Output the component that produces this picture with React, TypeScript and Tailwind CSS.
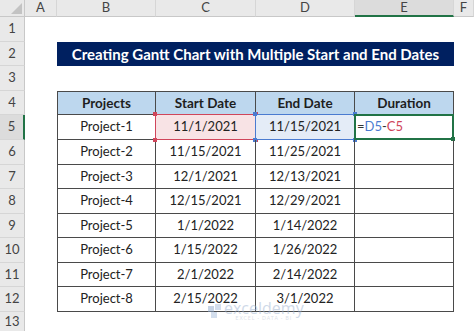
import React from 'react';

const cols = ['A', 'B', 'C', 'D', 'E', 'F'];
const rowStarts = [
    'row-start-2', 'row-start-3', 'row-start-4', 'row-start-5', 'row-start-6', 'row-start-7', 'row-start-8',
    'row-start-9', 'row-start-10', 'row-start-11', 'row-start-12', 'row-start-13', 'row-start-14',
];
const colStarts = ['col-start-3', 'col-start-4', 'col-start-5', 'col-start-6'];

const data = [
    ['Project-1', '11/1/2021', '11/15/2021'],
    ['Project-2', '11/15/2021', '11/25/2021'],
    ['Project-3', '12/1/2021', '12/13/2021'],
    ['Project-4', '12/15/2021', '12/29/2021'],
    ['Project-5', '1/1/2022', '1/14/2022'],
    ['Project-6', '1/15/2022', '1/26/2022'],
    ['Project-7', '2/1/2022', '2/14/2022'],
    ['Project-8', '2/15/2022', '3/1/2022'],
];

// formula reference highlight with the little corner handles
function RefBox({ border, fill }: { border: string; fill: string }) {
    const sq = `absolute w-[4px] h-[4px] ${fill}`;
    return (
        <div className={`absolute inset-[-1px] pointer-events-none border-[1.5px] ${border}`}>
            <span className={`${sq} -left-[3px] -top-[3px]`} />
            <span className={`${sq} -right-[3px] -top-[3px]`} />
            <span className={`${sq} -left-[3px] -bottom-[3px]`} />
            <span className={`${sq} -right-[3px] -bottom-[3px]`} />
        </div>
    );
}

export default function App() {
    return (
        <div className="relative w-[474px] h-[331px] overflow-hidden bg-white font-[Lato,sans-serif] grid grid-cols-[25px_32px_99px_100px_99px_99px_1fr] grid-rows-[17px_25px_24px_25px_24px_25px_25px_24px_25px_24px_25px_24px_25px_1fr]">
            {/* corner */}
            <div className="bg-[#e9e9e9] border-r border-b border-[#c8c8c8] flex items-end justify-end p-[2px]">
                <svg width="11" height="11" viewBox="0 0 11 11">
                    <polygon points="11,0 11,11 0,11" fill="#c3c3c3" />
                </svg>
            </div>

            {/* column headers */}
            {cols.map((c) => (
                <div
                    key={c}
                    className={`flex items-center justify-center text-[13px] text-[#444] border-r border-[#d6d6d6] ${
                        c === 'E'
                            ? 'bg-[#dcdcdc] border-b-2 border-b-[#217346]'
                            : 'bg-[#e9e9e9] border-b border-b-[#c8c8c8]'
                    }`}
                >
                    {c}
                </div>
            ))}

            {/* row headers */}
            {rowStarts.map((rs, i) => (
                <div
                    key={rs}
                    className={`col-start-1 ${rs} flex items-center justify-center text-[13px] text-[#444] border-b border-[#d6d6d6] ${
                        i === 4 ? 'bg-[#dcdcdc] border-r-2 border-r-[#217346]' : 'bg-[#e9e9e9] border-r border-r-[#c8c8c8]'
                    }`}
                >
                    {i + 1}
                </div>
            ))}

            {/* title */}
            <div className="col-start-3 col-end-7 row-start-3 bg-[#002060] flex items-center justify-center text-white font-bold text-[15px]">
                Creating Gantt Chart with Multiple Start and End Dates
            </div>

            {/* table header */}
            {['Projects', 'Start Date', 'End Date', 'Duration'].map((h, i) => (
                <div
                    key={h}
                    className={`${colStarts[i]} row-start-5 bg-[#bdd7ee] border-t border-r border-b border-[#4a4a4a] flex items-center justify-center font-bold text-[13.5px] text-[#1e1e1e] ${
                        i === 0 ? 'border-l' : ''
                    }`}
                >
                    {h}
                </div>
            ))}

            {/* table body */}
            {data.map((r, ri) => {
                const rs = rowStarts[ri + 4];
                const first = ri === 0;
                return (
                    <React.Fragment key={r[0]}>
                        <div className={`col-start-3 ${rs} border-l border-r border-b border-[#4a4a4a] flex items-center justify-center text-[13px] text-[#222]`}>
                            {r[0]}
                        </div>
                        <div
                            className={`col-start-4 ${rs} relative border-r border-b border-[#4a4a4a] flex items-center justify-center text-[13px] text-[#222] ${
                                first ? 'bg-[#f8e3e5]' : ''
                            }`}
                        >
                            {r[1]}
                            {first && <RefBox border="border-[#d0455a]" fill="bg-[#d0455a]" />}
                        </div>
                        <div
                            className={`col-start-5 ${rs} relative border-r border-b border-[#4a4a4a] flex items-center justify-center text-[13px] text-[#222] ${
                                first ? 'bg-[#e4ecf7]' : ''
                            }`}
                        >
                            {r[2]}
                            {first && <RefBox border="border-[#4a7bd0]" fill="bg-[#4a7bd0]" />}
                        </div>
                        <div className={`col-start-6 ${rs} relative border-r border-b border-[#4a4a4a] flex items-center pl-[2px] text-[13px]`}>
                            {first && (
                                <>
                                    <span className="text-[#333]">=</span>
                                    <span className="text-[#4a7bd0]">D5</span>
                                    <span className="text-[#333]">-</span>
                                    <span className="text-[#d0455a]">C5</span>
                                    <div className="absolute inset-[-1px] border-2 border-[#217346]">
                                        <span className="absolute -right-[3px] -bottom-[3px] w-[4px] h-[4px] bg-[#217346]" />
                                    </div>
                                </>
                            )}
                        </div>
                    </React.Fragment>
                );
            })}

            {/* watermark */}
            <div className="absolute left-[208px] top-[300px] flex items-center gap-[2px] opacity-50 pointer-events-none">
                <svg width="14" height="14" viewBox="0 0 14 14">
                    <rect x="0" y="2" width="6" height="6" fill="#8fa9cc" />
                    <rect x="7" y="0" width="6" height="6" fill="#a9bfdc" />
                    <rect x="3" y="8" width="6" height="6" fill="#a9bfdc" />
                </svg>
                <div className="flex flex-col items-center leading-none">
                    <span className="text-[16px] text-[#9fb5d3] font-['Open_Sans',sans-serif]">exceldemy</span>
                    <span className="text-[5px] tracking-[1px] text-[#b7c3d3]">EXCEL · DATA · BI</span>
                </div>
            </div>
        </div>
    );
}
